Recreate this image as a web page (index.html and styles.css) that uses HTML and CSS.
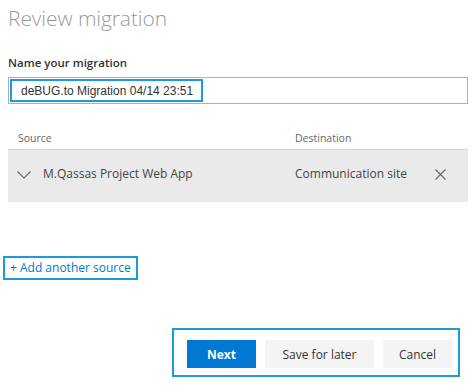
FILE: index.html
```html
<!DOCTYPE html>
<html>
<head>
<meta charset="utf-8">
<link rel="stylesheet" href="styles.css">
</head>
<body>
<div class="page">
  <h1 class="title">Review migration</h1>
  <div class="label">Name your migration</div>
  <div class="input">
    <span class="hl-name">deBUG.to Migration 04/14 23:51</span>
  </div>
  <div class="table">
    <div class="thead">
      <div class="col-src">Source</div>
      <div class="col-dst">Destination</div>
    </div>
    <div class="row">
      <div class="col-src cell-src">
        <svg class="chev" width="14" height="8" viewBox="0 0 14 8"><path d="M0.5 0.5 L7 7 L13.5 0.5" fill="none" stroke="#666" stroke-width="1.1"/></svg>
        <span>M.Qassas Project Web App</span>
      </div>
      <div class="col-dst">Communication site</div>
      <svg class="close" width="11" height="11" viewBox="0 0 11 11"><path d="M0.5 0.5 L10.5 10.5 M10.5 0.5 L0.5 10.5" fill="none" stroke="#666" stroke-width="1.1"/></svg>
    </div>
  </div>
  <div class="add"><span>+ Add another source</span></div>
  <div class="actions">
    <div class="btns">
      <button class="btn primary">Next</button>
      <button class="btn">Save for later</button>
      <button class="btn">Cancel</button>
    </div>
  </div>
</div>
</body>
</html>
```
FILE: styles.css
```css
* { box-sizing: border-box; }
html, body { margin: 0; padding: 0; background: #fff; }
body { font-family: "Open Sans", "Noto Sans", sans-serif; color: #333; }
.page { padding: 0 6px 0 8px; width: 474px; height: 386px; }
.title {
  margin: 0; padding-top: 3px;
  font-weight: 300; font-size: 21px; line-height: 30px; color: #9a9a9a;
  letter-spacing: -0.1px;
}
.label {
  margin-top: 21px; font-size: 11.5px; font-weight: 600; line-height: 17px; color: #333;
}
.input {
  margin-top: 6px; height: 27px; border: 1px solid #b0b0b0; padding: 1px;
  display: flex; align-items: stretch;
}
.hl-name {
  border: 2px solid #1c9ae0; padding: 1px 8px 0 9px; white-space: nowrap;
  font-family: "Liberation Sans", Arial, sans-serif; font-size: 12px; color: #333;
  display: flex; align-items: center;
}
.table { margin-top: 22px; }
.thead { display: flex; height: 24px; align-items: center; font-size: 10.5px; color: #666; border-bottom: 1px solid #d6d6d6; }
.col-src { width: 287px; padding-left: 10px; }
.col-dst { flex: 1; }
.row { display: flex; align-items: center; height: 52px; background: #eaeaea; font-size: 12px; color: #444; padding-right: 22px; padding-bottom: 5px; }
.cell-src { display: flex; align-items: center; padding-left: 9px; }
.chev { margin-right: 12px; margin-top: 2px; }
.close { margin-top: 1px; }
.add { margin-top: 53px; margin-left: -5px; }
.add span {
  display: inline-block; border: 2px solid #1c9ae0; padding: 0 5px 0 5px; height: 24px; line-height: 20px;
  font-size: 12px; color: #0078d4;
}
.actions { display: flex; justify-content: flex-end; margin-top: 48px; padding-right: 8px; }
.btns { border: 2px solid #1c9ae0; padding: 10px 6px 7px 13px; display: flex; gap: 9px; }
.btn {
  height: 28px; border: none; background: #f4f4f4; color: #333; font-family: inherit;
  font-size: 12px; padding: 0; border-radius: 0;
}
.btn:nth-child(1) { width: 69px; }
.btn:nth-child(2) { width: 109px; }
.btn:nth-child(3) { width: 69px; }
.btn.primary { background: #0078d4; color: #fff; font-weight: 700; }
```
